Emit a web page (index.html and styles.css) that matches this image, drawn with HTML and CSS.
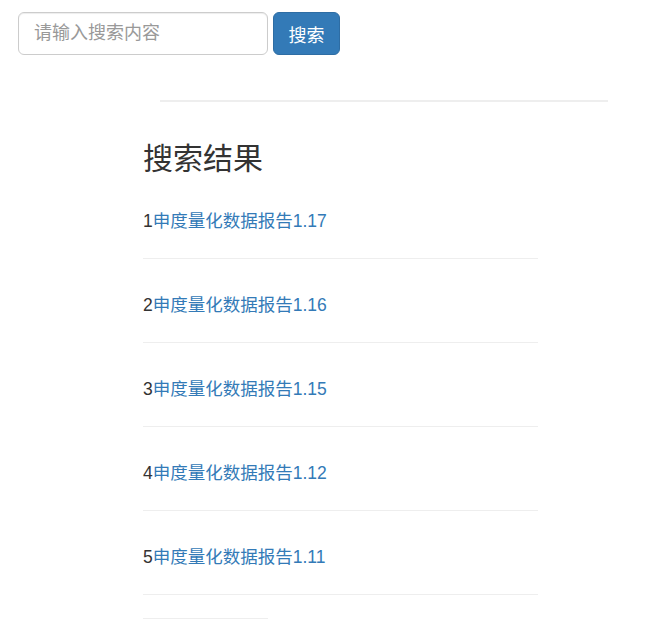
FILE: index.html
```html
<!DOCTYPE html>
<html lang="zh-CN">
  <head>
    <meta charset="UTF-8" />
    <meta name="viewport" content="width=device-width, initial-scale=1.0" />
    <title>搜索</title>
    <link rel="stylesheet" href="styles.css">
  </head>
  <body>
    <form class="search-bar">
      <input type="text" class="search-input" placeholder="请输入搜索内容" />
      <button type="button" class="search-btn">搜索</button>
    </form>

    <hr class="top-line" />

    <div class="results">
      <h2 class="results-title">搜索结果</h2>
      <div class="result-item">1<a href="#">申度量化数据报告1.17</a></div>
      <div class="result-item">2<a href="#">申度量化数据报告1.16</a></div>
      <div class="result-item">3<a href="#">申度量化数据报告1.15</a></div>
      <div class="result-item">4<a href="#">申度量化数据报告1.12</a></div>
      <div class="result-item">5<a href="#">申度量化数据报告1.11</a></div>
      <div class="result-end"></div>
    </div>
  </body>
</html>
```

FILE: styles.css
```css
body {
  margin: 0;
  padding: 0;
  font-family: "Liberation Sans", Arial, "Noto Sans CJK SC", sans-serif;
  font-size: 16px;
  color: #333;
  background-color: #fff;
}
.search-bar {
  display: flex;
  gap: 5px;
  margin: 0;
  padding: 12px 0 0 18px;
}
.search-input {
  box-sizing: border-box;
  width: 250px;
  height: 43px;
  padding: 8px 15px;
  font-family: inherit;
  font-size: 18px;
  color: #555;
  border: 1px solid #ccc;
  border-radius: 6px;
  box-shadow: inset 0 1px 1px rgba(0, 0, 0, 0.075);
  outline: none;
}
.search-input::placeholder {
  color: #999;
}
.search-btn {
  box-sizing: border-box;
  width: 67px;
  height: 43px;
  padding: 0;
  font-family: inherit;
  font-size: 18px;
  color: #fff;
  background-color: #337ab7;
  border: 1px solid #2e6da4;
  border-radius: 6px;
  cursor: pointer;
}
.top-line {
  width: 448px;
  margin: 45px 0 0 160px;
  border: 0;
  border-top: 2px solid #eee;
}
.results {
  width: 395px;
  margin-left: 143px;
}
.results-title {
  margin: 40px 0 0;
  font-size: 30px;
  font-weight: 400;
  line-height: 33px;
}
.result-item {
  padding: 35px 0 25px;
  font-size: 17.5px;
  line-height: 23px;
  border-bottom: 1px solid #eee;
}
.result-item a {
  color: #337ab7;
  text-decoration: none;
}
.result-end {
  width: 125px;
  margin-top: 23px;
  border-top: 1px solid #eee;
}
```
